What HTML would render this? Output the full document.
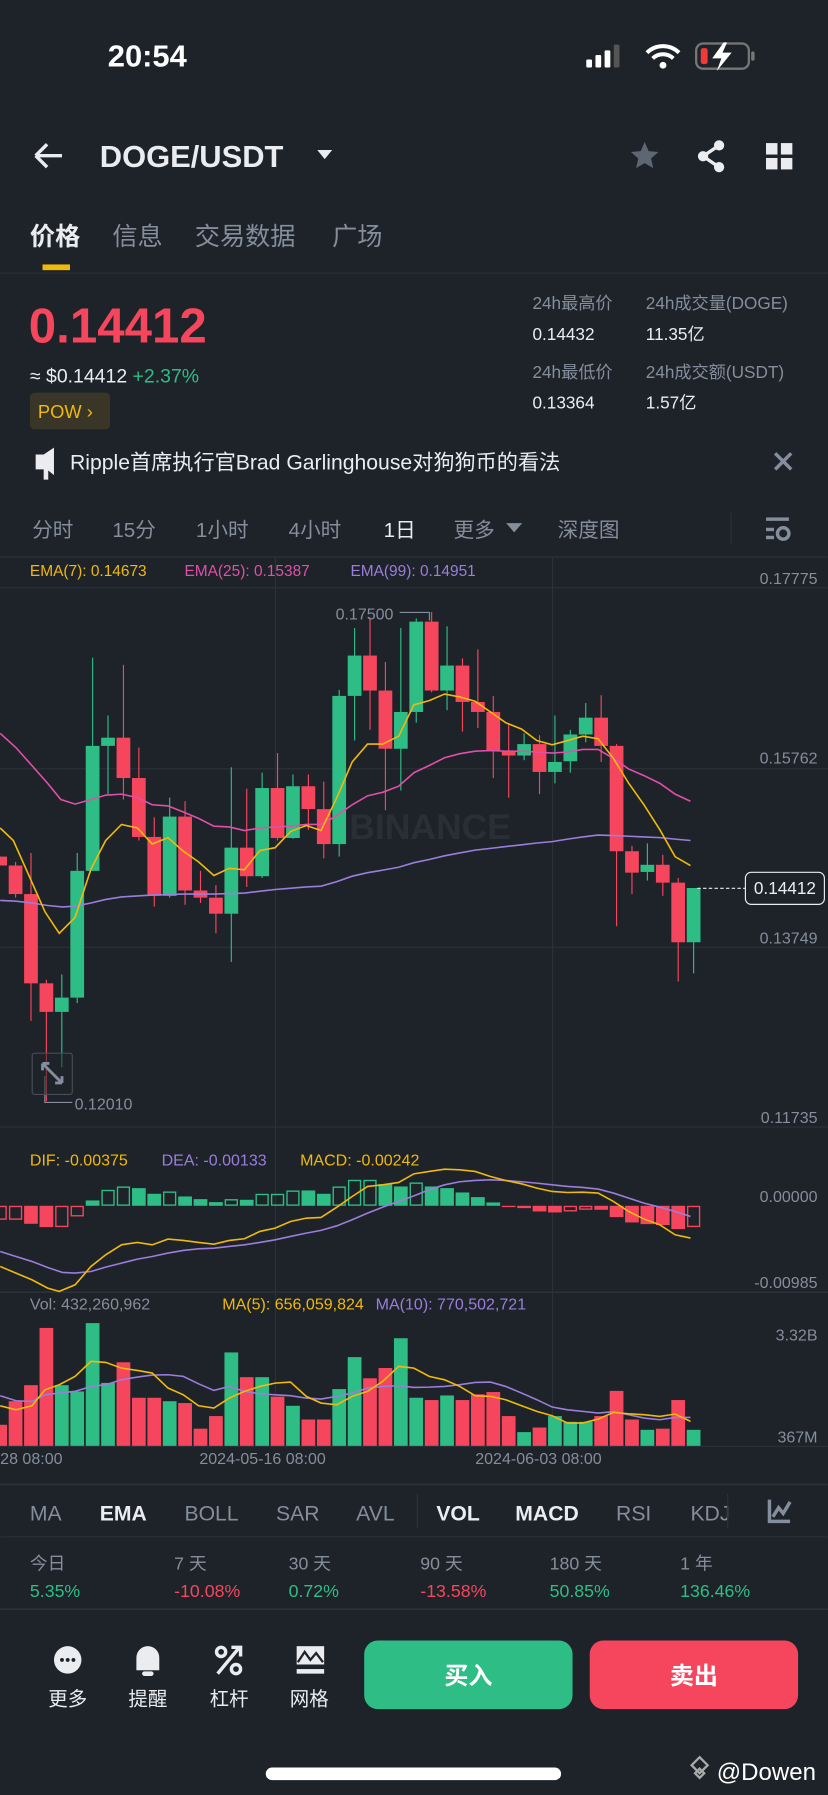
<!DOCTYPE html>
<html><head><meta charset="utf-8">
<style>
html,body{margin:0;padding:0;background:#1e2329;}
body{width:828px;height:1795px;overflow:hidden;}
svg{display:block}
text{font-family:"Liberation Sans","Noto Sans CJK SC",sans-serif;}
</style></head>
<body>
<svg id="s" width="828" height="1795" viewBox="0 0 723 1568" xmlns="http://www.w3.org/2000/svg">
<rect width="723" height="1568" fill="#1e2329"/>
<text x="94" y="58" font-size="27" fill="#fff" font-weight="bold">20:54</text>
<rect x="512" y="52" width="5" height="7" rx="1" fill="#fff"/>
<rect x="520" y="48" width="5" height="11" rx="1" fill="#fff"/>
<rect x="528" y="44" width="5" height="15" rx="1" fill="#fff"/>
<rect x="536" y="39" width="5" height="20" rx="1" fill="#555"/>
<path d="M565 46 a20 20 0 0 1 28 0" stroke="#fff" stroke-width="3.5" fill="none"/>
<path d="M570 51 a13 13 0 0 1 18 0" stroke="#fff" stroke-width="3.5" fill="none"/>
<circle cx="579" cy="57" r="3" fill="#fff"/>
<rect x="608" y="38" width="46" height="22" rx="6" stroke="#777" stroke-width="2" fill="none"/>
<rect x="656" y="45" width="3" height="8" rx="1" fill="#777"/>
<rect x="612" y="42" width="6" height="14" rx="2" fill="#f03a3a"/>
<path d="M632 37 L622 51 L630 51 L626 62 L639 46 L631 46 L635 37 Z" fill="#fff"/>
<path d="M31 136 H54 M31 136 L41 126 M31 136 L41 146" stroke="#eaecef" stroke-width="3" fill="none"/>
<text x="87" y="146" font-size="27" font-weight="bold" fill="#eaecef">DOGE/USDT</text>
<path d="M277 131 H290 L283.5 139 Z" fill="#eaecef"/>
<path d="M563 124 l3.5 8 8.5 .8 -6.4 5.7 1.9 8.4 -7.5-4.4 -7.5 4.4 1.9-8.4 -6.4-5.7 8.5-.8z" fill="#5e6673"/>
<circle cx="628" cy="127" r="4.5" fill="#eaecef"/><circle cx="628" cy="146" r="4.5" fill="#eaecef"/><circle cx="614" cy="136.5" r="4.5" fill="#eaecef"/>
<path d="M628 127 L614 136.5 L628 146" stroke="#eaecef" stroke-width="3" fill="none"/>
<rect x="669" y="125" width="10" height="10" fill="#eaecef"/><rect x="682" y="125" width="10" height="10" fill="#eaecef"/>
<rect x="669" y="138" width="10" height="10" fill="#eaecef"/><rect x="682" y="138" width="10" height="10" fill="#eaecef"/>
<text x="26" y="214" font-size="22" fill="#eaecef" font-weight="bold">价格</text>
<text x="98" y="214" font-size="22" fill="#848e9c">信息</text>
<text x="170" y="214" font-size="22" fill="#848e9c">交易数据</text>
<text x="290" y="214" font-size="22" fill="#848e9c">广场</text>
<rect x="37" y="231" width="24" height="5" fill="#f0b90b"/>
<rect x="0" y="238" width="723" height="1" fill="#2b3139"/>
<text x="25" y="299" font-size="43" font-weight="bold" fill="#f6465d">0.14412</text>
<text x="26" y="334" font-size="17" fill="#eaecef">≈ $0.14412 <tspan fill="#2ebd85">+2.37%</tspan></text>
<rect x="26" y="343" width="70" height="32" rx="4" fill="#3a3627"/>
<text x="33" y="365" font-size="16" fill="#f0b90b">POW ›</text>
<g font-size="15">
<text x="465" y="270" fill="#848e9c">24h最高价</text>
<text x="564" y="270" fill="#848e9c">24h成交量(DOGE)</text>
<text x="465" y="297" fill="#eaecef">0.14432</text>
<text x="564" y="297" fill="#eaecef">11.35亿</text>
<text x="465" y="330" fill="#848e9c">24h最低价</text>
<text x="564" y="330" fill="#848e9c">24h成交额(USDT)</text>
<text x="465" y="357" fill="#eaecef">0.13364</text>
<text x="564" y="357" fill="#eaecef">1.57亿</text>
</g>
<path d="M31 397 H38 L47 391 V415 L42 411 V419 H38 V410 H31 Z" fill="#eaecef"/>
<text x="61" y="410" font-size="18.5" fill="#eaecef">Ripple首席执行官Brad Garlinghouse对狗狗币的看法</text>
<path d="M677 396 L691 410 M691 396 L677 410" stroke="#848e9c" stroke-width="3"/>
<g font-size="18" fill="#848e9c">
<text x="28" y="469">分时</text><text x="98" y="469">15分</text><text x="171" y="469">1小时</text>
<text x="252" y="469">4小时</text><text x="335" y="469" fill="#eaecef">1日</text>
<text x="396" y="469">更多</text><text x="487" y="469">深度图</text>
</g>
<path d="M442 457 H456 L449 465 Z" fill="#848e9c"/>
<rect x="638" y="448" width="1" height="28" fill="#2b3139"/>
<rect x="669" y="452" width="20" height="3" fill="#848e9c"/>
<rect x="669" y="461" width="7" height="3" fill="#848e9c"/><rect x="669" y="468" width="7" height="3" fill="#848e9c"/>
<circle cx="684" cy="466" r="5" stroke="#848e9c" stroke-width="3" fill="none"/>
<rect x="0" y="486" width="723" height="1" fill="#2b3139"/>
<g fill="#2b3139">
<rect x="0" y="513" width="723" height="1"/><rect x="0" y="671" width="723" height="1"/>
<rect x="0" y="827" width="723" height="1"/><rect x="0" y="984" width="723" height="1"/>
<rect x="0" y="1128" width="723" height="1.5"/><rect x="0" y="1263" width="723" height="1"/>
<rect x="240" y="487" width="1" height="776"/><rect x="482" y="487" width="1" height="776"/>
<rect x="0" y="1296" width="723" height="1.5"/><rect x="0" y="1342" width="723" height="1"/><rect x="0" y="1405" width="723" height="1.5"/>
</g>
<text x="305" y="733" font-size="31" font-weight="bold" fill="#2a2f37">BINANCE</text>
<g font-size="13.5">
<text x="26" y="503" fill="#f0b90b">EMA(7): 0.14673</text>
<text x="161" y="503" fill="#e04fa8">EMA(25): 0.15387</text>
<text x="306" y="503" fill="#9b7ddc">EMA(99): 0.14951</text>
</g>
<g font-size="14" fill="#848e9c" text-anchor="end">
<text x="714" y="510">0.17775</text><text x="714" y="667">0.15762</text>
<text x="714" y="824">0.13749</text><text x="714" y="981">0.11735</text>
<text x="714" y="1050">0.00000</text><text x="714" y="1125">-0.00985</text>
<text x="714" y="1171">3.32B</text><text x="714" y="1260">367M</text>
</g>
<g id="chart"></g>
<text x="293" y="541" font-size="14" fill="#848e9c">0.17500</text>
<path d="M349 535 H375 V542" stroke="#848e9c" stroke-width="1" fill="none"/>
<text x="65" y="969" font-size="14" fill="#848e9c">0.12010</text>
<path d="M39 940 V963 H63" stroke="#848e9c" stroke-width="1" fill="none"/>
<rect x="28" y="920" width="35" height="36" rx="2" stroke="#474d57" stroke-width="1" fill="#1e2329" fill-opacity="0.5"/>
<path d="M37 929 L54 946 M37 929 v6 M37 929 h6 M54 946 v-6 M54 946 h-6" stroke="#848e9c" stroke-width="2.5" fill="none"/>
<line x1="609" y1="776" x2="651" y2="776" stroke="#eaecef" stroke-width="1" stroke-dasharray="3,2"/>
<rect x="651" y="762" width="69" height="28" rx="5" fill="#1e2329" stroke="#eaecef" stroke-width="1"/>
<text x="685.5" y="781" font-size="15" fill="#eaecef" text-anchor="middle">0.14412</text>
<g font-size="14">
<text x="26" y="1018" fill="#f0b90b">DIF: -0.00375</text>
<text x="141" y="1018" fill="#9b7ddc">DEA: -0.00133</text>
<text x="262" y="1018" fill="#f0b90b">MACD: -0.00242</text>
<text x="26" y="1144" fill="#848e9c">Vol: 432,260,962</text>
<text x="194" y="1144" fill="#f0b90b">MA(5): 656,059,824</text>
<text x="328" y="1144" fill="#9b7ddc">MA(10): 770,502,721</text>
<text x="0" y="1279" fill="#848e9c">28 08:00</text>
<text x="174" y="1279" fill="#848e9c">2024-05-16 08:00</text>
<text x="415" y="1279" fill="#848e9c">2024-06-03 08:00</text>
</g>
<g font-size="18.5" fill="#848e9c">
<text x="26" y="1328">MA</text><text x="87" y="1328" fill="#eaecef" font-weight="bold">EMA</text>
<text x="161" y="1328">BOLL</text><text x="241" y="1328">SAR</text><text x="311" y="1328">AVL</text>
<text x="381" y="1328" fill="#eaecef" font-weight="bold">VOL</text><text x="450" y="1328" fill="#eaecef" font-weight="bold">MACD</text>
<text x="538" y="1328">RSI</text><text x="603" y="1328">KDJ</text>
</g>
<rect x="364" y="1305" width="1" height="30" fill="#2b3139"/>
<rect x="636" y="1300" width="87" height="40" fill="#1e2329"/>
<rect x="635" y="1305" width="1" height="30" fill="#2b3139"/>
<path d="M672 1310 V1329 H690 M675 1325 L680 1317 L684 1322 L690 1312" stroke="#848e9c" stroke-width="3" fill="none"/>
<g font-size="15.5" fill="#848e9c">
<text x="26" y="1371">今日</text><text x="152" y="1371">7 天</text><text x="252" y="1371">30 天</text>
<text x="367" y="1371">90 天</text><text x="480" y="1371">180 天</text><text x="594" y="1371">1 年</text>
</g>
<g font-size="15.5">
<text x="26" y="1395" fill="#2ebd85">5.35%</text><text x="152" y="1395" fill="#f6465d">-10.08%</text>
<text x="252" y="1395" fill="#2ebd85">0.72%</text><text x="367" y="1395" fill="#f6465d">-13.58%</text>
<text x="480" y="1395" fill="#2ebd85">50.85%</text><text x="594" y="1395" fill="#2ebd85">136.46%</text>
</g>
<circle cx="59" cy="1450" r="12" fill="#eaecef"/>
<circle cx="54" cy="1450" r="1.7" fill="#1e2329"/><circle cx="59" cy="1450" r="1.7" fill="#1e2329"/><circle cx="64" cy="1450" r="1.7" fill="#1e2329"/>
<path d="M119 1459 V1448 a10 10 0 0 1 20 0 V1459 Z" fill="#eaecef"/>
<rect x="124" y="1460" width="10" height="4" rx="2" fill="#eaecef"/>
<circle cx="193" cy="1443" r="4" stroke="#eaecef" stroke-width="3" fill="none"/>
<circle cx="206" cy="1458" r="4" stroke="#eaecef" stroke-width="3" fill="none"/>
<path d="M190 1462 L209 1439 M202 1439 H210 V1447" stroke="#eaecef" stroke-width="3" fill="none"/>
<rect x="259" y="1438" width="24" height="16" fill="#eaecef"/>
<path d="M260 1452 L266 1443 L271 1450 L276 1444 L282 1452" stroke="#1e2329" stroke-width="2" fill="none"/>
<rect x="259" y="1458" width="24" height="4" fill="#eaecef"/>
<g font-size="17" fill="#eaecef" text-anchor="middle">
<text x="59" y="1490">更多</text><text x="129" y="1490">提醒</text><text x="200" y="1490">杠杆</text><text x="270" y="1490">网格</text>
</g>
<rect x="318" y="1433" width="182" height="60" rx="12" fill="#2ebd85"/>
<rect x="515" y="1433" width="182" height="60" rx="12" fill="#f6465d"/>
<text x="409" y="1471" font-size="21" fill="#fff" text-anchor="middle" font-weight="bold">买入</text>
<text x="606" y="1471" font-size="21" fill="#fff" text-anchor="middle" font-weight="bold">卖出</text>
<rect x="232" y="1544" width="258" height="11" rx="5.5" fill="#fff"/>
<path d="M611 1535 l7 7 -7 7 -7 -7z M611 1545 l4 4 -4 4 -4 -4z" stroke="#aaa" stroke-width="2" fill="none"/>
<text x="626" y="1555" font-size="21" fill="#fff">@Dowen</text>
</svg>
<script>
(function(){
var NS="http://www.w3.org/2000/svg",g=document.getElementById("chart");
function el(t,a){var e=document.createElementNS(NS,t);for(var k in a)e.setAttribute(k,a[k]);g.appendChild(e);return e;}
var G="#2ebd85",R="#f6465d";
function X(z){return z*0.461;}
function Y1(z){return 484.7+z*0.3119;}
function Y2(z){return 978.2+z*0.2911;}
var col="rrrrggggrrrgrrrgrgrgrrggrrggrgrrrrgrgggrrrgrrg";
var c=[[845,870,845,870],[870,950,860,960],[950,1200,835,1305],[1200,1280,1190,1530],[1240,1280,1175,1435],[885,1240,835,1255],[535,885,288,885],[512,535,450,670],[512,625,308,685],[625,790,540,800],[790,955,735,985],[733,955,680,960],[733,940,690,980],[940,960,885,975],[960,1005,925,1060],[820,1005,595,1140],[820,900,655,930],[653,900,610,905],[653,793,555,800],[648,793,615,795],[648,712,615,770],[712,810,635,850],[395,810,378,845],[282,395,205,520],[282,380,175,490],[380,543,300,715],[440,543,205,660],[187,440,178,470],[187,380,160,385],[310,380,200,435],[310,412,290,495],[412,440,265,485],[440,550,395,625],[550,562,475,680],[530,562,500,575],[530,608,505,670],[580,608,450,640],[503,578,490,610],[456,503,415,525],[456,535,393,580],[535,830,530,1040],[830,890,815,950],[868,888,808,912],[868,918,840,955],[918,1085,905,1195],[933,1085,933,1172]];
var vol=[1244.6,1224,1210,1160,1210,1215.5,1155.8,1208,1190,1221,1221,1224,1225.6,1248,1237,1181.4,1203,1203,1220,1228,1240,1240,1213.4,1185.5,1204,1195,1169,1221,1223,1219,1223,1218,1216,1237,1251,1247,1237,1242,1242,1237,1215,1240,1249,1248,1223,1249];
var mh=[[300,'rh'],[300,'rh'],[312,'r'],[322,'r'],[322,'rh'],[290,'rh'],[242,'g'],[210,'gh'],[200,'gh'],[205,'g'],[222,'g'],[215,'gh'],[230,'g'],[238,'g'],[247,'g'],[238,'gh'],[240,'g'],[222,'gh'],[222,'gh'],[212,'gh'],[212,'g'],[222,'g'],[200,'gh'],[180,'gh'],[180,'gh'],[193,'g'],[200,'g'],[188,'gh'],[200,'g'],[205,'g'],[218,'g'],[232,'g'],[248,'g'],[262,'r'],[265,'r'],[275,'r'],[278,'r'],[275,'rh'],[270,'rh'],[270,'r'],[292,'r'],[308,'r'],[313,'r'],[316,'r'],[328,'r'],[322,'rh']];
for(var i=0;i<46;i++){
 var x=X(29.2*i),cl=col[i]=='g'?G:R,d=c[i];
 var t=Math.min(Y1(d[0]),Y1(d[1])),b=Math.max(Y1(d[0]),Y1(d[1]));
 el("rect",{x:x-0.5,y:Y1(d[2]),width:1,height:Y1(d[3])-Y1(d[2]),fill:cl});
 el("rect",{x:x-6,y:t,width:12,height:Math.max(1,b-t),fill:cl});
 el("rect",{x:x-6,y:vol[i],width:12,height:1263-vol[i],fill:cl});
 var m=mh[i],z=Y2(258),v=Y2(m[0]),mc=m[1][0]=='g'?G:R,top=Math.min(z,v),h=Math.abs(z-v);
 if(m[1].length>1)el("rect",{x:x-5.2,y:top+0.6,width:10.4,height:Math.max(0.5,h-1.2),fill:"none",stroke:mc,"stroke-width":1.2});
 else el("rect",{x:x-6,y:top,width:12,height:Math.max(1,h),fill:mc});
}
function line(pts,Y,colr){var s="";for(var j=0;j<pts.length;j+=2)s+=(j?"L":"M")+X(pts[j]).toFixed(1)+" "+Y(pts[j+1]).toFixed(1);el("path",{d:s,stroke:colr,"stroke-width":1.4,fill:"none"});}
line([0,500,30,540,60,590,90,640,115,685,142,698,172,685,200,673,230,670,260,680,288,700,318,703,347,720,376,738,405,760,434,762,463,772,492,765,521,762,550,760,580,755,608,755,638,730,667,700,696,675,725,665,755,648,784,610,813,590,842,568,871,557,900,550,929,548,958,550,988,550,1017,552,1046,555,1075,552,1104,545,1133,545,1162,570,1191,600,1220,618,1250,640,1279,670,1308,690],Y1,"#e04fa8");
line([0,968,30,970,60,975,90,982,118,986,142,984,172,975,200,965,230,958,260,955,288,953,347,950,405,950,463,947,521,937,580,930,608,928,638,915,667,900,696,890,725,883,755,875,784,862,813,853,842,843,871,835,900,827,929,822,958,817,988,812,1017,807,1046,803,1075,796,1104,790,1133,785,1162,786,1191,788,1220,790,1250,792,1279,796,1308,800],Y1,"#9b7ddc");
line([0,765,25,800,55,900,85,1000,112,1060,142,1015,172,880,200,800,230,755,260,765,288,810,318,792,347,830,376,860,405,898,434,878,463,882,492,828,521,820,550,775,580,758,608,772,638,680,667,580,696,530,725,530,755,508,784,420,813,408,842,390,871,398,900,410,929,440,958,470,988,488,1017,520,1046,532,1075,520,1104,508,1133,515,1162,570,1191,640,1220,700,1250,770,1279,845,1308,870],Y1,"#f0b90b");
line([0,395,30,410,60,425,90,443,118,458,142,460,172,455,200,442,230,430,260,418,288,410,318,400,347,392,376,387,405,385,434,380,463,375,492,368,521,360,550,350,580,340,608,332,638,318,667,300,696,280,725,262,755,245,784,228,813,210,842,195,871,186,900,182,929,180,958,182,988,186,1017,190,1046,195,1075,200,1104,203,1133,208,1162,220,1191,235,1220,250,1250,262,1279,275,1308,290],Y2,"#9b7ddc");
line([0,440,30,460,60,480,90,505,112,515,142,495,172,440,200,405,230,375,260,368,288,375,318,358,347,362,376,368,405,373,434,362,463,357,492,335,521,325,550,305,580,295,608,293,638,262,667,230,696,200,725,195,755,188,784,162,813,155,842,148,871,150,900,155,929,170,958,182,988,192,1017,205,1046,215,1075,218,1104,217,1133,220,1162,245,1191,275,1220,298,1250,315,1279,345,1308,355],Y2,"#f0b90b");
line([0,828,30,843,60,845,85,825,112,820,142,815,172,800,200,795,230,780,260,772,288,766,318,765,347,770,376,792,405,812,434,800,463,815,492,822,521,825,550,828,580,835,608,838,638,830,667,820,696,805,725,800,755,798,784,803,813,802,842,800,871,795,900,788,929,787,958,800,988,820,1017,840,1046,862,1075,870,1104,875,1133,880,1162,876,1191,885,1220,895,1250,900,1279,893,1308,893],Y2,"#9b7ddc");
line([0,858,30,870,60,858,85,810,112,795,142,770,172,725,200,728,230,745,260,752,288,760,318,805,347,825,376,858,405,865,434,835,463,815,492,800,521,790,550,787,580,830,608,850,638,855,667,830,696,815,725,785,755,740,784,745,813,770,842,780,871,800,900,828,929,830,958,840,988,858,1017,875,1046,888,1075,910,1104,910,1133,898,1162,878,1191,882,1220,885,1250,890,1279,883,1308,905],Y2,"#f0b90b");
})();
</script>
</body></html>
